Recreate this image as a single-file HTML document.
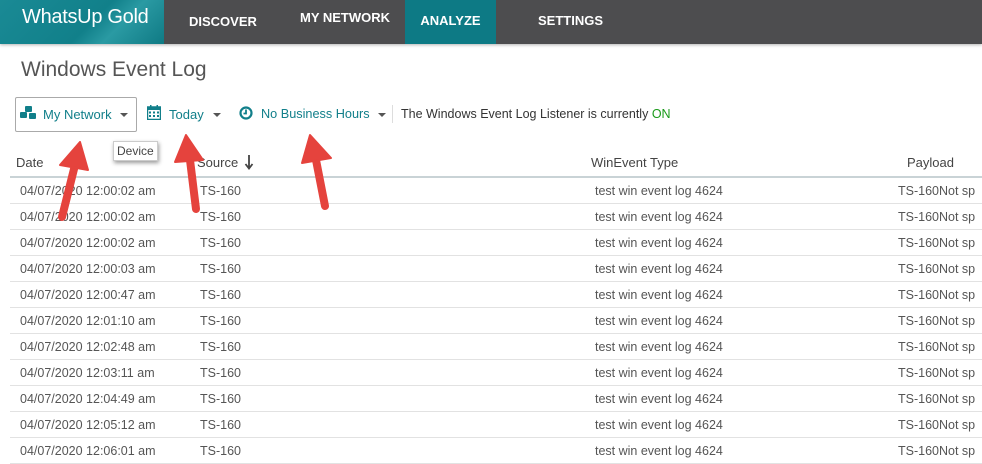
<!DOCTYPE html>
<html><head><meta charset="utf-8"><style>
*{margin:0;padding:0;box-sizing:border-box}
body{width:982px;height:460px;overflow:hidden;background:#fff;font-family:"Liberation Sans",sans-serif;position:relative;color:#444}
.top{position:absolute;left:0;top:0;width:982px;height:44px;background:#4d4d4f;box-shadow:0 1px 3px rgba(0,0,0,.3)}
.logo{position:absolute;left:0;top:0;width:164px;height:44px;background:linear-gradient(135deg,#1a8a95 0%,#11808a 55%,#2a9aa3 70%,#0f7a84 100%);color:#fff;font-size:20px;padding:6px 0 0 22px;letter-spacing:-0.3px}
.nav{position:absolute;top:0;height:44px;line-height:40px;color:#fff;font-weight:bold;font-size:13px}
.an{background:#0d7a85;text-align:center}
h1{position:absolute;left:21px;top:58px;font-size:21px;font-weight:normal;color:#555}
.btn{position:absolute;left:15px;top:97px;width:122px;height:35px;border:1px solid #aaa;border-radius:2px}
.t{position:absolute;font-size:13px;color:#117f8a;top:107px}
.car{position:absolute;top:113px;width:0;height:0;border-left:4px solid transparent;border-right:4px solid transparent;border-top:4px solid #555}
.tip{position:absolute;left:113px;top:141px;width:45px;height:20px;background:#fff;border:1px solid #ccc;box-shadow:1px 2px 4px rgba(0,0,0,.4);font-size:12px;color:#444;padding:2px 0 0 3px}
.hd{position:absolute;top:155px;font-size:13px;color:#444}
.hl{position:absolute;left:10px;top:176px;width:972px;height:2px;background:#c9d3d6}
.row{position:absolute;left:10px;width:972px;height:26px;border-bottom:1px solid #e2e2e2;font-size:12.5px;color:#555}
.row span{position:absolute;top:6px;white-space:nowrap}
</style></head><body>
<div class="top"></div>
<div class="logo">WhatsUp Gold</div>
<div class="nav" style="left:189px;top:2px">DISCOVER</div>
<div class="nav" style="left:300px;top:-2px">MY NETWORK</div>
<div class="nav an" style="left:405px;width:91px;top:0;line-height:42px">ANALYZE</div>
<div class="nav" style="left:538px;top:0;line-height:42px">SETTINGS</div>
<h1>Windows Event Log</h1>
<div class="btn"></div>
<svg style="position:absolute;left:20px;top:106px" width="18" height="14" viewBox="0 0 18 14"><g fill="#117f8a"><rect x="5" y="0" width="7" height="6" rx="1"/><rect x="0" y="6" width="7" height="6" rx="1"/><rect x="9" y="7" width="7" height="6" rx="1"/></g></svg>
<div class="t" style="left:43px">My Network</div><div class="car" style="left:120px"></div>
<svg style="position:absolute;left:147px;top:105px" width="14" height="15" viewBox="0 0 14 15"><rect x="0.5" y="2" width="13" height="12.5" fill="none" stroke="#117f8a" stroke-width="1.5"/><rect x="0" y="2" width="14" height="3" fill="#117f8a"/><g fill="#117f8a"><rect x="2" y="6.5" width="2" height="2"/><rect x="6" y="6.5" width="2" height="2"/><rect x="10" y="6.5" width="2" height="2"/><rect x="2" y="10" width="2" height="2"/><rect x="6" y="10" width="2" height="2"/><rect x="10" y="10" width="2" height="2"/></g><rect x="3" y="0" width="1.5" height="3" fill="#117f8a"/><rect x="9.5" y="0" width="1.5" height="3" fill="#117f8a"/></svg>
<div class="t" style="left:169px">Today</div><div class="car" style="left:213px"></div>
<svg style="position:absolute;left:239px;top:106px" width="14" height="14" viewBox="0 0 14 14"><circle cx="7" cy="7" r="5.5" fill="none" stroke="#117f8a" stroke-width="2.2"/><path d="M7 3.5V7.5H4.5" fill="none" stroke="#117f8a" stroke-width="1.8"/></svg>
<div class="t" style="left:261px;font-size:12.7px">No Business Hours</div><div class="car" style="left:378px"></div>
<div style="position:absolute;left:392px;top:105px;width:1px;height:18px;background:#ddd"></div>
<div class="t" style="left:401px;color:#333;font-size:12.5px">The Windows Event Log Listener is currently <span style="color:#1a9a1a">ON</span></div>
<div class="hd" style="left:16px">Date</div>
<div class="hd" style="left:197px">Source</div>
<svg style="position:absolute;left:244px;top:154px" width="10" height="16"><path d="M5 1V14M1.5 10L5 14.5 8.5 10" fill="none" stroke="#444" stroke-width="1.8"/></svg>
<div class="hd" style="left:591px">WinEvent Type</div>
<div class="hd" style="left:907px">Payload</div>
<div class="hl"></div>
<div class="row" style="top:178px"><span style="left:10px">04/07/2020 12:00:02 am</span><span style="left:190px">TS-160</span><span style="left:585px">test win event log 4624</span><span style="left:888px">TS-160Not sp</span></div>
<div class="row" style="top:204px"><span style="left:10px">04/07/2020 12:00:02 am</span><span style="left:190px">TS-160</span><span style="left:585px">test win event log 4624</span><span style="left:888px">TS-160Not sp</span></div>
<div class="row" style="top:230px"><span style="left:10px">04/07/2020 12:00:02 am</span><span style="left:190px">TS-160</span><span style="left:585px">test win event log 4624</span><span style="left:888px">TS-160Not sp</span></div>
<div class="row" style="top:256px"><span style="left:10px">04/07/2020 12:00:03 am</span><span style="left:190px">TS-160</span><span style="left:585px">test win event log 4624</span><span style="left:888px">TS-160Not sp</span></div>
<div class="row" style="top:282px"><span style="left:10px">04/07/2020 12:00:47 am</span><span style="left:190px">TS-160</span><span style="left:585px">test win event log 4624</span><span style="left:888px">TS-160Not sp</span></div>
<div class="row" style="top:308px"><span style="left:10px">04/07/2020 12:01:10 am</span><span style="left:190px">TS-160</span><span style="left:585px">test win event log 4624</span><span style="left:888px">TS-160Not sp</span></div>
<div class="row" style="top:334px"><span style="left:10px">04/07/2020 12:02:48 am</span><span style="left:190px">TS-160</span><span style="left:585px">test win event log 4624</span><span style="left:888px">TS-160Not sp</span></div>
<div class="row" style="top:360px"><span style="left:10px">04/07/2020 12:03:11 am</span><span style="left:190px">TS-160</span><span style="left:585px">test win event log 4624</span><span style="left:888px">TS-160Not sp</span></div>
<div class="row" style="top:386px"><span style="left:10px">04/07/2020 12:04:49 am</span><span style="left:190px">TS-160</span><span style="left:585px">test win event log 4624</span><span style="left:888px">TS-160Not sp</span></div>
<div class="row" style="top:412px"><span style="left:10px">04/07/2020 12:05:12 am</span><span style="left:190px">TS-160</span><span style="left:585px">test win event log 4624</span><span style="left:888px">TS-160Not sp</span></div>
<div class="row" style="top:438px"><span style="left:10px">04/07/2020 12:06:01 am</span><span style="left:190px">TS-160</span><span style="left:585px">test win event log 4624</span><span style="left:888px">TS-160Not sp</span></div>
<div class="tip">Device</div>
<svg style="position:absolute;left:0;top:0" width="982" height="460">
<g fill="#e5433d" stroke="#e5433d" stroke-linecap="round" stroke-linejoin="round">
<line x1="62" y1="217" x2="75" y2="165" stroke-width="8"/>
<polygon points="80,142 60,165 88,170" stroke-width="2"/>
<line x1="196" y1="209" x2="190" y2="160" stroke-width="8"/>
<polygon points="186,135 175,162 203,160" stroke-width="2"/>
<line x1="325" y1="206" x2="316" y2="160" stroke-width="8"/>
<polygon points="310,135 302,163 331,158" stroke-width="2"/>
</g></svg>
</body></html>
